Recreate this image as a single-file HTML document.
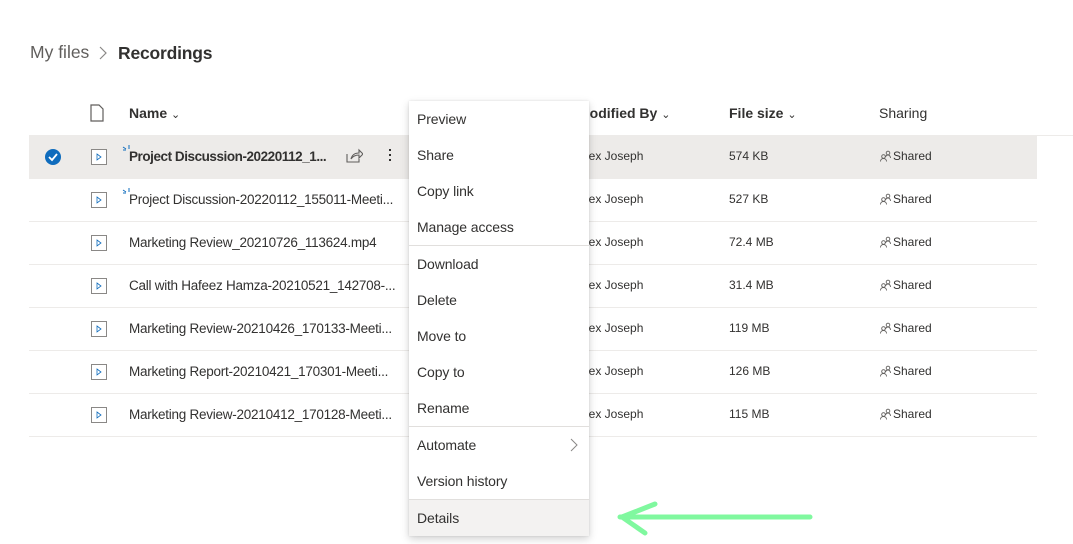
<!DOCTYPE html>
<html><head><meta charset="utf-8"><style>
*{margin:0;padding:0;box-sizing:border-box}
body{width:1073px;height:544px;background:#fff;font-family:"Liberation Sans",sans-serif;color:#323130;position:relative;overflow:hidden}
.a{position:absolute;white-space:nowrap}
.bc1{left:30px;top:42px;font-size:17.5px;color:#605e5c}
.bc2{left:118px;top:43px;font-size:17.5px;font-weight:bold;color:#323130;letter-spacing:-0.2px}
.hd{top:105px;font-size:14px;font-weight:bold;color:#323130}
.row{position:absolute;left:29px;width:1008px;height:43px;border-bottom:1px solid #edebe9}
.nm{left:129px;font-size:13.5px;color:#323130;letter-spacing:-0.25px}
.mb{left:578px;font-size:12px;color:#323130}
.fs{left:729px;font-size:12px;color:#323130}
.sh{left:893px;font-size:12px;color:#323130}
.menu{position:absolute;left:409px;top:101px;width:180px;height:435px;background:#fff;box-shadow:0 3px 8px rgba(0,0,0,.18),0 0 2px rgba(0,0,0,.1)}
.mi{position:absolute;left:8px;font-size:14px;color:#323130;letter-spacing:-0.1px}
.sep{position:absolute;left:0;width:180px;height:1px;background:#e1dfdd}
.pi{position:absolute;left:880px}
</style></head><body>
<div class="a bc1">My files</div>
<svg class="a" style="left:98px;top:46px" width="10" height="14"><path d="M2 1l6 6-6 6" fill="none" stroke="#8a8886" stroke-width="1.2"/></svg>
<div class="a bc2">Recordings</div>

<svg class="a" style="left:90px;top:104px" width="14" height="18"><path d="M1 1h8l4 4v12H1z" fill="none" stroke="#605e5c" stroke-width="1.2"/></svg>
<div class="a hd" style="left:129px">Name <span style="font-weight:normal;font-size:11px">⌄</span></div>
<div class="a hd" style="left:578px">Modified By <span style="font-weight:normal;font-size:11px">⌄</span></div>
<div class="a hd" style="left:729px">File size <span style="font-weight:normal;font-size:11px">⌄</span></div>
<div class="a hd" style="left:879px;font-weight:normal">Sharing</div>
<div class="a" style="left:29px;top:135px;width:1044px;height:1px;background:#edebe9"></div>

<div class="row" style="top:136px;background:#edebe9"></div>
<div class="row" style="top:179px"></div>
<div class="row" style="top:222px"></div>
<div class="row" style="top:265px"></div>
<div class="row" style="top:308px"></div>
<div class="row" style="top:351px"></div>
<div class="row" style="top:394px"></div>

<svg class="a" style="left:44px;top:148px" width="18" height="18"><circle cx="9" cy="9" r="8" fill="#0f6cbd"/><path d="M5 9l3 3 5-6" fill="none" stroke="#fff" stroke-width="1.8"/></svg>

<svg class="a" style="left:91px;top:149px" width="16" height="16"><rect x=".5" y=".5" width="15" height="15" fill="#fff" stroke="#8a8886"/><path d="M6 5l4 3-4 3z" fill="none" stroke="#0f6cbd" stroke-width=".8"/></svg>
<svg class="a" style="left:91px;top:192px" width="16" height="16"><rect x=".5" y=".5" width="15" height="15" fill="#fff" stroke="#8a8886"/><path d="M6 5l4 3-4 3z" fill="none" stroke="#0f6cbd" stroke-width=".8"/></svg>
<svg class="a" style="left:91px;top:235px" width="16" height="16"><rect x=".5" y=".5" width="15" height="15" fill="#fff" stroke="#8a8886"/><path d="M6 5l4 3-4 3z" fill="none" stroke="#0f6cbd" stroke-width=".8"/></svg>
<svg class="a" style="left:91px;top:278px" width="16" height="16"><rect x=".5" y=".5" width="15" height="15" fill="#fff" stroke="#8a8886"/><path d="M6 5l4 3-4 3z" fill="none" stroke="#0f6cbd" stroke-width=".8"/></svg>
<svg class="a" style="left:91px;top:321px" width="16" height="16"><rect x=".5" y=".5" width="15" height="15" fill="#fff" stroke="#8a8886"/><path d="M6 5l4 3-4 3z" fill="none" stroke="#0f6cbd" stroke-width=".8"/></svg>
<svg class="a" style="left:91px;top:364px" width="16" height="16"><rect x=".5" y=".5" width="15" height="15" fill="#fff" stroke="#8a8886"/><path d="M6 5l4 3-4 3z" fill="none" stroke="#0f6cbd" stroke-width=".8"/></svg>
<svg class="a" style="left:91px;top:407px" width="16" height="16"><rect x=".5" y=".5" width="15" height="15" fill="#fff" stroke="#8a8886"/><path d="M6 5l4 3-4 3z" fill="none" stroke="#0f6cbd" stroke-width=".8"/></svg>

<svg class="a" style="left:122px;top:144px" width="10" height="8"><path d="M1 3l3 2M4 6H1M7 1v4" stroke="#0f6cbd" stroke-width="1"/></svg>
<svg class="a" style="left:122px;top:187px" width="10" height="8"><path d="M1 3l3 2M4 6H1M7 1v4" stroke="#0f6cbd" stroke-width="1"/></svg>

<div class="a nm" style="top:149px;font-weight:bold;letter-spacing:-0.45px">Project Discussion-20220112_1...</div>
<svg class="a" style="left:345px;top:148px" width="18" height="16"><path d="M2 6v8h12v-3M6 11c1-4 4-6 8-6V2l4 4-4 4V7c-3 0-6 1-8 4z" fill="none" stroke="#605e5c" stroke-width="1.1"/></svg>
<div class="a" style="left:389px;top:149px;width:2px;height:2px;background:#323130;box-shadow:0 5px 0 #323130,0 10px 0 #323130"></div>
<div class="a nm" style="top:192px">Project Discussion-20220112_155011-Meeti...</div>
<div class="a nm" style="top:235px">Marketing Review_20210726_113624.mp4</div>
<div class="a nm" style="top:278px">Call with Hafeez Hamza-20210521_142708-...</div>
<div class="a nm" style="top:321px">Marketing Review-20210426_170133-Meeti...</div>
<div class="a nm" style="top:364px">Marketing Report-20210421_170301-Meeti...</div>
<div class="a nm" style="top:407px">Marketing Review-20210412_170128-Meeti...</div>

<div class="a mb" style="top:149px">Alex Joseph</div><div class="a fs" style="top:149px">574 KB</div><div class="a sh" style="top:149px">Shared</div>
<div class="a mb" style="top:192px">Alex Joseph</div><div class="a fs" style="top:192px">527 KB</div><div class="a sh" style="top:192px">Shared</div>
<div class="a mb" style="top:235px">Alex Joseph</div><div class="a fs" style="top:235px">72.4 MB</div><div class="a sh" style="top:235px">Shared</div>
<div class="a mb" style="top:278px">Alex Joseph</div><div class="a fs" style="top:278px">31.4 MB</div><div class="a sh" style="top:278px">Shared</div>
<div class="a mb" style="top:321px">Alex Joseph</div><div class="a fs" style="top:321px">119 MB</div><div class="a sh" style="top:321px">Shared</div>
<div class="a mb" style="top:364px">Alex Joseph</div><div class="a fs" style="top:364px">126 MB</div><div class="a sh" style="top:364px">Shared</div>
<div class="a mb" style="top:407px">Alex Joseph</div><div class="a fs" style="top:407px">115 MB</div><div class="a sh" style="top:407px">Shared</div>

<svg class="pi" style="top:150px" width="12" height="12"><circle cx="3.5" cy="6.5" r="1.8" fill="none" stroke="#605e5c" stroke-width=".9"/><path d="M.5 11.5c0-2 1.5-3 3-3s3 1 3 3" fill="none" stroke="#605e5c" stroke-width=".9"/><circle cx="8" cy="3" r="1.8" fill="none" stroke="#605e5c" stroke-width=".9"/><path d="M5.5 7c.5-1.5 1.5-2 2.5-2s2.5 1 2.5 3" fill="none" stroke="#605e5c" stroke-width=".9"/></svg>
<svg class="pi" style="top:193px" width="12" height="12"><circle cx="3.5" cy="6.5" r="1.8" fill="none" stroke="#605e5c" stroke-width=".9"/><path d="M.5 11.5c0-2 1.5-3 3-3s3 1 3 3" fill="none" stroke="#605e5c" stroke-width=".9"/><circle cx="8" cy="3" r="1.8" fill="none" stroke="#605e5c" stroke-width=".9"/><path d="M5.5 7c.5-1.5 1.5-2 2.5-2s2.5 1 2.5 3" fill="none" stroke="#605e5c" stroke-width=".9"/></svg>
<svg class="pi" style="top:236px" width="12" height="12"><circle cx="3.5" cy="6.5" r="1.8" fill="none" stroke="#605e5c" stroke-width=".9"/><path d="M.5 11.5c0-2 1.5-3 3-3s3 1 3 3" fill="none" stroke="#605e5c" stroke-width=".9"/><circle cx="8" cy="3" r="1.8" fill="none" stroke="#605e5c" stroke-width=".9"/><path d="M5.5 7c.5-1.5 1.5-2 2.5-2s2.5 1 2.5 3" fill="none" stroke="#605e5c" stroke-width=".9"/></svg>
<svg class="pi" style="top:279px" width="12" height="12"><circle cx="3.5" cy="6.5" r="1.8" fill="none" stroke="#605e5c" stroke-width=".9"/><path d="M.5 11.5c0-2 1.5-3 3-3s3 1 3 3" fill="none" stroke="#605e5c" stroke-width=".9"/><circle cx="8" cy="3" r="1.8" fill="none" stroke="#605e5c" stroke-width=".9"/><path d="M5.5 7c.5-1.5 1.5-2 2.5-2s2.5 1 2.5 3" fill="none" stroke="#605e5c" stroke-width=".9"/></svg>
<svg class="pi" style="top:322px" width="12" height="12"><circle cx="3.5" cy="6.5" r="1.8" fill="none" stroke="#605e5c" stroke-width=".9"/><path d="M.5 11.5c0-2 1.5-3 3-3s3 1 3 3" fill="none" stroke="#605e5c" stroke-width=".9"/><circle cx="8" cy="3" r="1.8" fill="none" stroke="#605e5c" stroke-width=".9"/><path d="M5.5 7c.5-1.5 1.5-2 2.5-2s2.5 1 2.5 3" fill="none" stroke="#605e5c" stroke-width=".9"/></svg>
<svg class="pi" style="top:365px" width="12" height="12"><circle cx="3.5" cy="6.5" r="1.8" fill="none" stroke="#605e5c" stroke-width=".9"/><path d="M.5 11.5c0-2 1.5-3 3-3s3 1 3 3" fill="none" stroke="#605e5c" stroke-width=".9"/><circle cx="8" cy="3" r="1.8" fill="none" stroke="#605e5c" stroke-width=".9"/><path d="M5.5 7c.5-1.5 1.5-2 2.5-2s2.5 1 2.5 3" fill="none" stroke="#605e5c" stroke-width=".9"/></svg>
<svg class="pi" style="top:408px" width="12" height="12"><circle cx="3.5" cy="6.5" r="1.8" fill="none" stroke="#605e5c" stroke-width=".9"/><path d="M.5 11.5c0-2 1.5-3 3-3s3 1 3 3" fill="none" stroke="#605e5c" stroke-width=".9"/><circle cx="8" cy="3" r="1.8" fill="none" stroke="#605e5c" stroke-width=".9"/><path d="M5.5 7c.5-1.5 1.5-2 2.5-2s2.5 1 2.5 3" fill="none" stroke="#605e5c" stroke-width=".9"/></svg>

<div class="menu">
<div class="mi" style="top:10px">Preview</div>
<div class="mi" style="top:46px">Share</div>
<div class="mi" style="top:82px">Copy link</div>
<div class="mi" style="top:118px">Manage access</div>
<div class="sep" style="top:144px"></div>
<div class="mi" style="top:155px">Download</div>
<div class="mi" style="top:191px">Delete</div>
<div class="mi" style="top:227px">Move to</div>
<div class="mi" style="top:263px">Copy to</div>
<div class="mi" style="top:299px">Rename</div>
<div class="sep" style="top:325px"></div>
<div class="mi" style="top:336px">Automate</div>
<svg class="a" style="left:161px;top:337px" width="8" height="14"><path d="M1 1l6 6-6 6" fill="none" stroke="#8a8886" stroke-width="1"/></svg>
<div class="mi" style="top:372px">Version history</div>
<div style="position:absolute;left:0;top:398px;width:180px;height:37px;background:#f3f2f1;border-top:1px solid #e1dfdd"></div>
<div class="mi" style="top:409px">Details</div>
</div>

<svg class="a" style="left:610px;top:495px" width="210" height="45"><path d="M200 22H10M45 9L12 22l23 16" fill="none" stroke="#80f89f" stroke-width="5" stroke-linecap="round" stroke-linejoin="round"/></svg>
</body></html>
